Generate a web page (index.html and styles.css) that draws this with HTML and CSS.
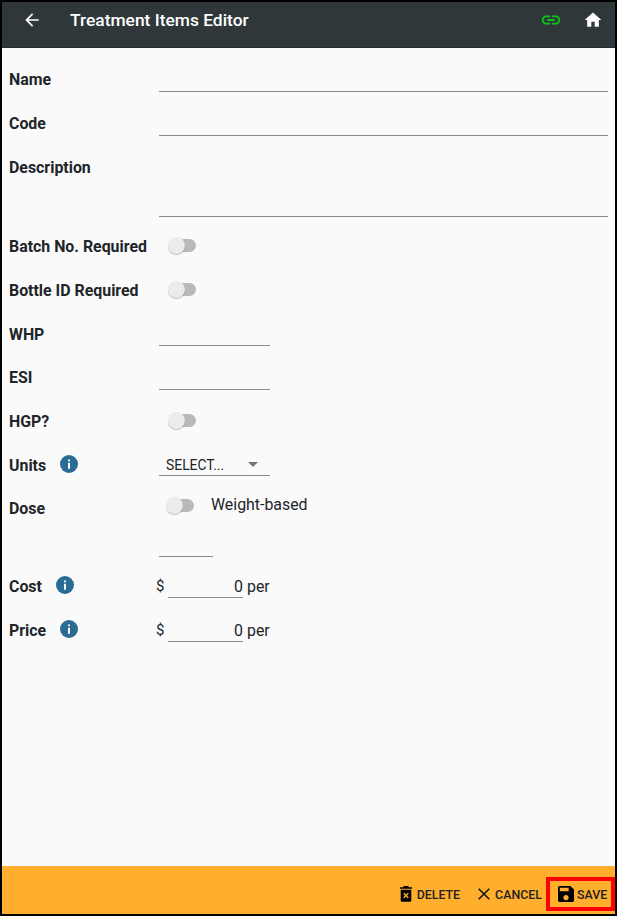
FILE: index.html
```
<!DOCTYPE html>
<html lang="en">
<head>
  <meta charset="UTF-8">
  <meta name="viewport" content="width=device-width, initial-scale=1.0">
  <title>Treatment Items Editor</title>
  <link rel="stylesheet" href="styles.css">
</head>
<body>

  <header class="top-bar">
    <svg class="back-icon" viewBox="0 0 24 24"><path d="M20 11H7.83l5.59-5.59L12 4l-8 8 8 8 1.41-1.41L7.83 13H20v-2z"/></svg>
    <h1>Treatment Items Editor</h1>
    <svg class="link-icon" viewBox="0 0 24 24"><path d="M3.9 12c0-1.71 1.39-3.1 3.1-3.1h4V7H7c-2.76 0-5 2.24-5 5s2.24 5 5 5h4v-1.9H7c-1.71 0-3.1-1.39-3.1-3.1zM8 13h8v-2H8v2zm9-6h-4v1.9h4c1.71 0 3.1 1.39 3.1 3.1s-1.39 3.1-3.1 3.1h-4V17h4c2.76 0 5-2.24 5-5s-2.24-5-5-5z"/></svg>
    <svg class="home-icon" viewBox="0 0 24 24"><path d="M10 20v-6h4v6h5v-8h3L12 3 2 12h3v8z"/></svg>
  </header>

  <main class="form">
    <div class="row">
      <span class="label">Name</span>
      <span class="field full"></span>
    </div>
    <div class="row">
      <span class="label">Code</span>
      <span class="field full"></span>
    </div>
    <div class="row row-description">
      <span class="label">Description</span>
      <span class="field full"></span>
    </div>
    <div class="row">
      <span class="label">Batch No. Required</span>
      <span class="switch"></span>
    </div>
    <div class="row">
      <span class="label">Bottle ID Required</span>
      <span class="switch"></span>
    </div>
    <div class="row row-short">
      <span class="label">WHP</span>
      <span class="field medium"></span>
    </div>
    <div class="row">
      <span class="label">ESI</span>
      <span class="field medium"></span>
    </div>
    <div class="row">
      <span class="label">HGP?</span>
      <span class="switch"></span>
    </div>
    <div class="row row-short">
      <span class="label">Units
        <svg class="info-icon" viewBox="0 0 24 24"><circle cx="12" cy="12" r="12"/><path d="M10.7 10.2h2.6v8h-2.6zM10.7 6h2.6v2.4h-2.6z"/></svg>
      </span>
      <span class="field medium select">SELECT...<span class="arrow"></span></span>
    </div>
    <div class="row row-dose">
      <span class="label">Dose</span>
      <div class="dose">
        <div class="dose-type">
          <span class="switch"></span>
          <span>Weight-based</span>
        </div>
        <span class="field small"></span>
      </div>
    </div>
    <div class="row">
      <span class="label">Cost
        <svg class="info-icon" viewBox="0 0 24 24"><circle cx="12" cy="12" r="12"/><path d="M10.7 10.2h2.6v8h-2.6zM10.7 6h2.6v2.4h-2.6z"/></svg>
      </span>
      <div class="money"><span class="dollar">$</span><span class="field amount">0</span><span class="per">per</span></div>
    </div>
    <div class="row">
      <span class="label">Price
        <svg class="info-icon" viewBox="0 0 24 24"><circle cx="12" cy="12" r="12"/><path d="M10.7 10.2h2.6v8h-2.6zM10.7 6h2.6v2.4h-2.6z"/></svg>
      </span>
      <div class="money"><span class="dollar">$</span><span class="field amount">0</span><span class="per">per</span></div>
    </div>
  </main>

  <footer class="bottom-bar">
    <button class="btn-delete">
      <svg class="delete-icon" viewBox="0 0 12 16"><path fill-rule="evenodd" d="M0 1.2h3L4 0h4l1 1.2h3v1.6H0zM.7 3.8h10.6v10.4a1.6 1.6 0 0 1-1.6 1.6H2.3a1.6 1.6 0 0 1-1.6-1.6zM3.2 7.8L5 9.6 3.2 11.4l1 1L6 10.6l1.8 1.8 1-1L7 9.6l1.8-1.8-1-1L6 8.6 4.2 6.8z"/></svg>
      DELETE
    </button>
    <button class="btn-cancel">
      <svg class="cancel-icon" viewBox="0 0 12 12"><path d="M.7.7l10.6 10.6M11.3.7L.7 11.3"/></svg>
      CANCEL
    </button>
    <button class="btn-save">
      <svg class="save-icon" viewBox="3 3 18 18"><path d="M17 3H5c-1.11 0-2 .9-2 2v14c0 1.1.89 2 2 2h14c1.1 0 2-.9 2-2V7l-4-4zm-5 16c-1.66 0-3-1.34-3-3s1.34-3 3-3 3 1.34 3 3-1.34 3-3 3zm3-10H5V5h10v4z"/></svg>
      SAVE
    </button>
  </footer>

</body>
</html>
```
FILE: styles.css
```
* {
  box-sizing: border-box;
}

body {
  font-family: Roboto, sans-serif;
  font-size: 15.9px;
  line-height: 20px;
  color: #212529;
  background-color: #fafafa;
  margin: 0;
  height: 916px;
  border: 2px solid #000;
  display: flex;
  flex-direction: column;
  overflow: hidden;
}

svg {
  display: block;
  flex: none;
}

.top-bar {
  display: flex;
  align-items: center;
  height: 46px;
  padding: 0 12px 9px 20px;
  background-color: #30373b;
  border-bottom: 1px solid #262b2e;
  color: #fff;
}

.top-bar h1 {
  flex: 1;
  margin: 0 0 0 28px;
  font-size: 17.4px;
  font-weight: 500;
}

.back-icon {
  width: 20px;
  height: 20px;
  fill: #fff;
}

.link-icon {
  width: 22px;
  height: 22px;
  fill: #0fc416;
}

.home-icon {
  width: 20px;
  height: 20px;
  margin-left: 21px;
  fill: #fff;
}

.form {
  flex: 1;
  padding: 9px 7px 0;
}

.row {
  display: flex;
  align-items: flex-start;
  height: 44px;
}

.row-short {
  height: 43px;
}

.row-description {
  height: 79px;
}

.row-dose {
  height: 78px;
}

.label {
  display: flex;
  align-items: center;
  gap: 14px;
  width: 150px;
  height: 45px;
  font-weight: 700;
}

.info-icon {
  width: 18px;
  height: 18px;
  margin-bottom: 3px;
  fill: #2b6c95;
}

.info-icon path {
  fill: #fff;
}

.field {
  height: 35px;
  border-bottom: 1px solid #8c8c8c;
}

.full {
  flex: 1;
}

.row-description .field {
  height: 72px;
}

.medium {
  width: 111px;
}

.row-short .field {
  height: 34px;
}

.row-short .select {
  height: 33px;
}

.small {
  width: 54px;
}

.select {
  display: flex;
  align-items: center;
  justify-content: space-between;
  padding: 11px 12px 0 7px;
  font-size: 13.9px;
}

.arrow {
  border: 5px solid transparent;
  border-top-color: #757575;
  border-bottom: none;
}

/* Toggle: grey track with the knob at the left end */
.switch {
  position: relative;
  width: 27px;
  height: 13px;
  margin: 15px 0 0 10px;
  border-radius: 7px;
  background-color: #b9b9b9;
}

.switch::before {
  content: "";
  position: absolute;
  top: -2px;
  left: -1px;
  width: 17px;
  height: 17px;
  border-radius: 50%;
  background-color: #ececec;
  box-shadow: 0 1px 1px rgba(0, 0, 0, 0.25);
}

.dose {
  display: flex;
  flex-direction: column;
  height: 71px;
  justify-content: space-between;
}

.dose-type {
  display: flex;
  align-items: center;
  gap: 17px;
  height: 41px;
}

.dose-type .switch {
  margin: 0 0 0 8px;
}

.money {
  display: flex;
  margin-left: -3px;
  line-height: 45px;
}

.dollar {
  width: 12px;
  font-size: 15px;
}

.amount {
  width: 75px;
  height: 34px;
  text-align: right;
}

.per {
  margin-left: 4px;
}

.bottom-bar {
  display: flex;
  align-items: flex-end;
  justify-content: flex-end;
  height: 48px;
  padding-bottom: 3px;
  background-color: #ffae2e;
}

.bottom-bar button {
  display: flex;
  align-items: center;
  height: 34px;
  padding: 0;
  border: none;
  background: none;
  font-family: inherit;
  font-size: 12.4px;
  font-weight: 500;
  color: #212121;
}

.delete-icon {
  width: 12px;
  height: 16px;
  margin-right: 5px;
  fill: #000;
}

.cancel-icon {
  width: 12px;
  height: 12px;
  margin-right: 5px;
  fill: none;
  stroke: #111;
  stroke-width: 1.5;
}

.save-icon {
  width: 16px;
  height: 16px;
  margin-right: 3px;
  fill: #000;
}

.bottom-bar .btn-cancel {
  margin-left: 18px;
}

.bottom-bar .btn-save {
  width: 69px;
  margin-left: 4px;
  padding-left: 8px;
  border: 4px solid #f00;
}
```
